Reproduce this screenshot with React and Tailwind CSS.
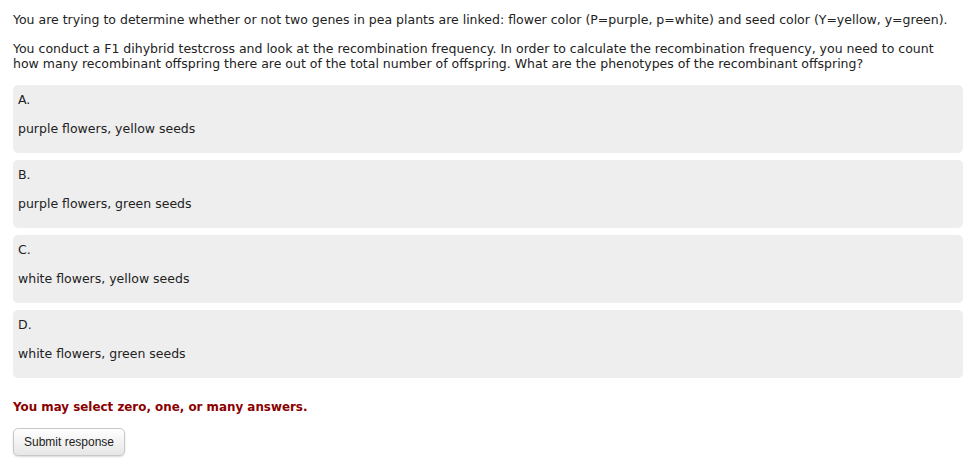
import React from 'react';

const choices = [
  { key: 'A.', text: 'purple flowers, yellow seeds' },
  { key: 'B.', text: 'purple flowers, green seeds' },
  { key: 'C.', text: 'white flowers, yellow seeds' },
  { key: 'D.', text: 'white flowers, green seeds' },
];

const Choice = ({ choice }) => (
  <div className="h-[68px] rounded-[5px] bg-[#eeeeee] px-[5px] pt-[7px]">
    <div className="leading-[15px]">{choice.key}</div>
    <div className="mt-[14px] leading-[15px]">{choice.text}</div>
  </div>
);

export default function App() {
  return (
    <div className="min-h-screen bg-white px-[13px] pt-[12px] text-[12.5px] text-[#222] font-['DejaVu_Sans',sans-serif]">
      <div className="w-[950px]">
        <p className="leading-[15px]">
          You are trying to determine whether or not two genes in pea plants are linked: flower color (P=purple, p=white) and seed color (Y=yellow, y=green).
        </p>
        <p className="mt-[14px] leading-[15px]">
          You conduct a F1 dihybrid testcross and look at the recombination frequency. In order to calculate the recombination frequency, you need to count how many recombinant offspring there are out of the total number of offspring. What are the phenotypes of the recombinant offspring?
        </p>

        <div className="mt-[14px] flex flex-col gap-[7px]">
          {choices.map((c) => (
            <Choice key={c.key} choice={c} />
          ))}
        </div>

        <div className="mt-[22px] text-[11.9px] font-bold leading-[15px] text-[#8b0000]">
          You may select zero, one, or many answers.
        </div>

        <button className="mt-[13px] h-[28px] rounded-[5px] border border-[#c8c8c8] bg-gradient-to-b from-white to-[#e6e6e6] px-[10px] text-[12px] text-[#222] shadow-[0_1px_2px_rgba(0,0,0,0.15)] font-['Liberation_Sans',Arial,sans-serif]">
          Submit response
        </button>
      </div>
    </div>
  );
}
